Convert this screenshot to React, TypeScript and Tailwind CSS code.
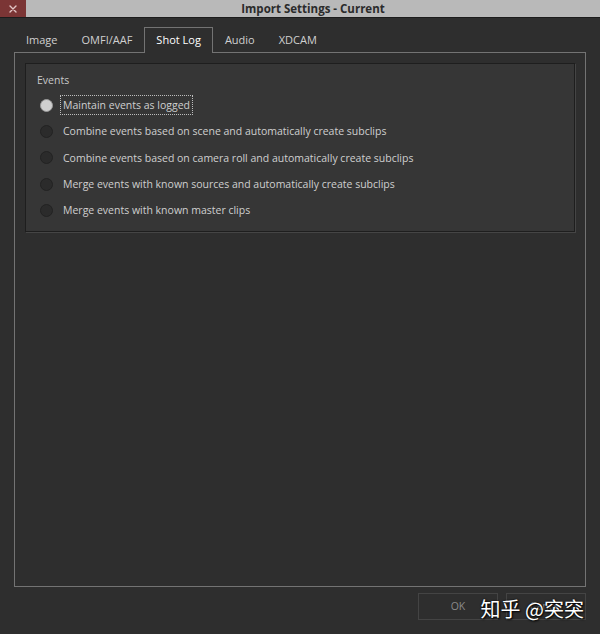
import React, { useState } from 'react';

const tabs = ['Image', 'OMFI/AAF', 'Shot Log', 'Audio', 'XDCAM'];

const options = [
  'Maintain events as logged',
  'Combine events based on scene and automatically create subclips',
  'Combine events based on camera roll and automatically create subclips',
  'Merge events with known sources and automatically create subclips',
  'Merge events with known master clips',
];

const font = { fontFamily: '"Open Sans", "Noto Sans", sans-serif' };

const App: React.FC = () => {
  const [activeTab, setActiveTab] = useState('Shot Log');
  const [selected, setSelected] = useState(0);

  return (
    <div className="w-[600px] h-[634px] bg-[#2e2e2e] flex flex-col overflow-hidden relative" style={font}>
      {/* title bar */}
      <div className="h-[18px] flex bg-[#b9b9b9] border-b border-[#1c1c1c]">
        <button className="w-[26px] h-full bg-[#7b3535] flex items-center justify-center">
          <svg width="8" height="8" viewBox="0 0 8 8">
            <path d="M1 1L7 7M7 1L1 7" stroke="#e2c6c6" strokeWidth="1.4" strokeLinecap="round" />
          </svg>
        </button>
        <div className="flex-1 text-center text-[11.5px] leading-[17px] font-bold text-[#2b2b2b]">
          Import Settings - Current
        </div>
      </div>

      <div className="flex-1 flex flex-col px-[14px] pt-[9px]">
        {/* tabs */}
        <div className="flex items-end h-[25px]">
          {tabs.map(tab => {
            const active = tab === activeTab;
            return (
              <button
                key={tab}
                onClick={() => setActiveTab(tab)}
                className={
                  active
                    ? 'h-[26px] px-[11px] text-[11px] text-white border border-b-0 border-[#737373] bg-[#2e2e2e] relative top-[1px] z-10'
                    : 'h-[24px] px-[12px] text-[11px] text-[#d0d0d0]'
                }
              >
                {tab}
              </button>
            );
          })}
        </div>

        {/* tab panel */}
        <div className="h-[535px] border border-[#737373] p-[10px]">
          <div className="h-[169px] bg-[#363636] border border-[#1e1e1e] shadow-[1px_1px_0_#454545] px-[11px] pt-[9px]">
            <div className="text-[10.5px] text-[#c8c8c8] leading-[15px] mb-[4px]">Events</div>
            <div className="flex flex-col">
              {options.map((opt, i) => (
                <label key={opt} className="flex items-center h-[26.3px] cursor-default" onClick={() => setSelected(i)}>
                  <span
                    className={
                      selected === i
                        ? 'w-[13px] h-[13px] rounded-full bg-[#cfcfcf] ml-[3px] border border-[#9a9a9a]'
                        : 'w-[13px] h-[13px] rounded-full bg-[#2b2b2b] ml-[3px] border border-[#222]'
                    }
                  />
                  <span
                    className={
                      selected === i
                        ? 'ml-[7px] px-[2px] py-[1px] border border-dotted border-[#bdbdbd] text-[10.5px] text-[#cfcfcf] leading-[16px]'
                        : 'ml-[7px] px-[2px] py-[1px] border border-transparent text-[10.5px] text-[#cfcfcf] leading-[16px]'
                    }
                  >
                    {opt}
                  </span>
                </label>
              ))}
            </div>
          </div>
        </div>

        {/* buttons */}
        <div className="flex justify-end gap-[8px] mt-[6px]">
          <button className="w-[80px] h-[27px] border border-[#444] text-[10.5px] text-[#8a8a8a]">OK</button>
          <button className="w-[80px] h-[27px] border border-[#444] text-[10.5px] text-[#8a8a8a]">Cancel</button>
        </div>
      </div>

      {/* watermark */}
      <div
        className="absolute right-[16px] bottom-[15px] text-[20px] text-white leading-none [text-shadow:0_0_2px_#000,1px_1px_2px_#000]"
        style={{ fontFamily: '"Noto Sans CJK SC", "Noto Sans", sans-serif' }}
      >
        知乎 @突突
      </div>
    </div>
  );
};

export default App;
